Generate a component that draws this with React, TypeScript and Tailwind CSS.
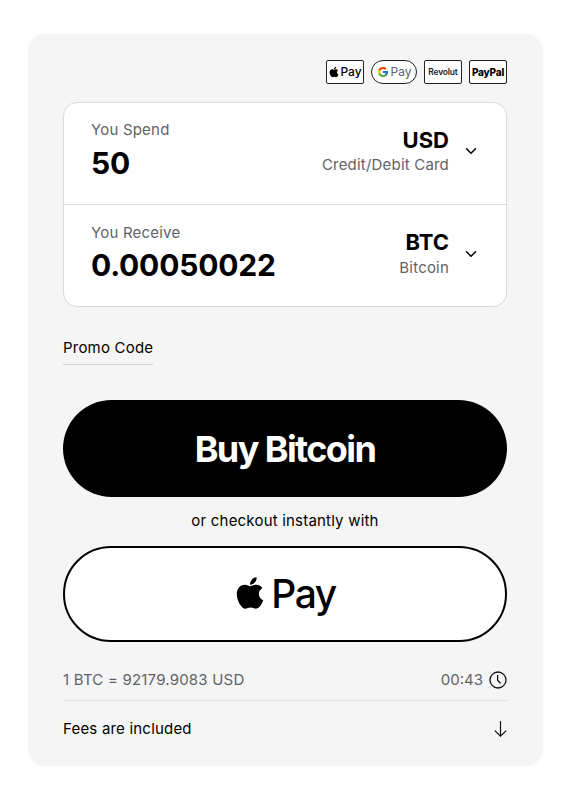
import { FaApple } from "react-icons/fa";
import { FcGoogle } from "react-icons/fc";
import { ChevronDown } from "lucide-react";

function Badge({ children, rounded }: { children: React.ReactNode; rounded?: boolean }) {
  return (
    <div
      className={
        "h-6 flex items-center justify-center bg-white border border-[#222] " +
        (rounded ? "w-[46px] rounded-full" : "w-[38px] rounded-[2px]")
      }
    >
      {children}
    </div>
  );
}

export default function App() {
  return (
    <div className="min-h-[793px] bg-white pt-[34px] pl-[28px] font-['Inter',sans-serif]">
      <div className="w-[515px] h-[732px] bg-[#f5f5f5] rounded-[17px] pl-[35px] pr-[36px] pt-[26px]">
        <div className="flex justify-end items-center gap-[7px] h-6">
          <Badge>
            <FaApple size={12} className="text-black" />
            <span className="text-[12px] font-medium text-black">Pay</span>
          </Badge>
          <Badge rounded>
            <FcGoogle size={12} />
            <span className="text-[12px] text-[#5f6368] ml-[2px]">Pay</span>
          </Badge>
          <Badge>
            <span className="text-[8.5px] font-semibold text-[#222] tracking-[-0.2px]">Revolut</span>
          </Badge>
          <Badge>
            <span className="text-[10px] font-extrabold text-black tracking-[-0.2px]">PayPal</span>
          </Badge>
        </div>

        <div className="mt-[18px] bg-white border border-[#d9d9d9] rounded-[14px]">
          {/* You Spend */}
          <div className="h-[102px] flex justify-between pl-[27px] pr-[26px] border-b border-[#d9d9d9]">
            <div className="pt-[18px]">
              <div className="text-[15px] leading-[18px] tracking-[0.2px] text-[#5f6368]">You Spend</div>
              <div className="text-[30px] leading-[40px] font-bold tracking-[-0.2px] text-black mt-[4px]">50</div>
            </div>
            <div className="flex items-start">
              <div className="text-right pt-[24px]">
                <div className="text-[22px] leading-[26px] font-bold text-black">USD</div>
                <div className="text-[15px] leading-[18px] tracking-[0.2px] text-[#5f6368] mt-[3px]">Credit/Debit Card</div>
              </div>
              <ChevronDown size={18} strokeWidth={2} className="ml-[13px] mt-[39px] text-black" />
            </div>
          </div>
          {/* You Receive */}
          <div className="h-[101px] flex justify-between pl-[27px] pr-[26px]">
            <div className="pt-[19px]">
              <div className="text-[15px] leading-[18px] tracking-[0.2px] text-[#5f6368]">You Receive</div>
              <div className="text-[30px] leading-[40px] font-bold tracking-[-0.2px] text-black mt-[3px]">0.00050022</div>
            </div>
            <div className="flex items-start">
              <div className="text-right pt-[24px]">
                <div className="text-[22px] leading-[26px] font-bold text-black">BTC</div>
                <div className="text-[15px] leading-[18px] tracking-[0.2px] text-[#5f6368] mt-[4px]">Bitcoin</div>
              </div>
              <ChevronDown size={18} strokeWidth={2} className="ml-[13px] mt-[40px] text-black" />
            </div>
          </div>
        </div>

        <div className="mt-[31px] w-[90px] h-[27px] border-b border-[#d0d0d0]">
          <span className="block text-[15px] leading-[20px] tracking-[0.2px] text-black whitespace-nowrap">Promo Code</span>
        </div>

        <button className="mt-[35px] w-full h-[97px] rounded-full bg-black text-white text-[36px] font-bold tracking-[-1.6px] flex items-center justify-center">
          Buy Bitcoin
        </button>

        <div className="mt-[14px] text-center text-[15px] leading-[20px] tracking-[0.2px] text-black">
          or checkout instantly with
        </div>

        <button className="mt-[15px] w-full h-[96px] rounded-full bg-white border-2 border-black flex items-center justify-center text-black">
          <FaApple size={36} className="mb-[3px]" />
          <span className="text-[39px] font-medium ml-[3px] mr-[2px] tracking-[-1.4px]">Pay</span>
        </button>

        <div className="mt-[20px] h-[39px] flex justify-between items-center border-b border-[#dedede] pb-[2px]">
          <span className="text-[15px] tracking-[0.2px] text-[#5f6368]">1 BTC = 92179.9083 USD</span>
          <div className="flex items-center gap-[6px]">
            <span className="text-[15px] text-[#5f6368]">00:43</span>
            <svg width="18" height="18" viewBox="0 0 18 18" fill="none" stroke="#111" strokeWidth="1.3" strokeLinecap="round">
              <circle cx="9" cy="9" r="8" />
              <path d="M8.6 4.5V9.2L11.2 12" />
            </svg>
          </div>
        </div>

        <div className="h-[56px] flex justify-between items-center">
          <span className="text-[15px] tracking-[0.2px] text-black">Fees are included</span>
          <svg width="13" height="16" viewBox="0 0 13 16" fill="none" stroke="#111" strokeWidth="1.2" className="mr-0">
            <path d="M6.5 0V15.2M0.8 9.6L6.5 15.2L12.2 9.6" />
          </svg>
        </div>
      </div>
    </div>
  );
}
